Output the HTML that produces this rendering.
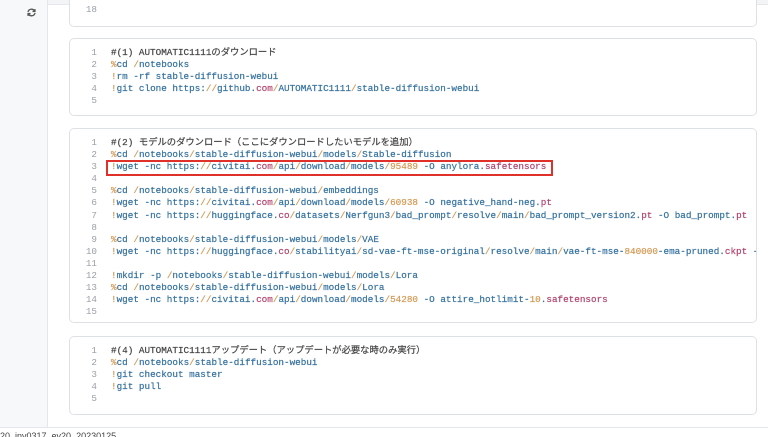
<!DOCTYPE html>
<html><head><meta charset="utf-8"><style>
body{margin:0;width:768px;height:436px;overflow:hidden;background:#fff;font-family:"Liberation Sans",sans-serif;position:relative}
.side{position:absolute;left:0;top:0;width:47px;height:427px;background:#f7f8fa;border-right:1px solid #e3e6ea}
.topb{position:absolute;left:48px;top:0;width:720px;height:4px;background:#f3f4f6;border-bottom:1px solid #e6e8eb}
.cell{position:absolute;left:69px;width:686px;border:1px solid #dde1e6;border-radius:5px;background:#fff;overflow:hidden}
pre{margin:0;position:absolute;left:0;top:8px;font-family:"Liberation Mono","Noto Sans CJK JP",monospace;font-size:9.3px;line-height:12.1px;color:#35729f;white-space:pre;-webkit-text-stroke:0.2px currentColor}
.n{display:inline-block;width:27px;text-align:right;color:#9aa0a6;margin-right:14px;-webkit-text-stroke:0}
.o{color:#d39a55}.p{color:#b2456e}.c{color:#444}
.red{position:absolute;left:106px;top:160px;width:443px;height:12px;border:2px solid #e0302a}
.bot{position:absolute;left:0;top:427px;width:768px;height:9px;border-top:1px solid #e3e6ea;background:#fff;font-size:9px;color:#444;line-height:9px;overflow:hidden}
</style></head><body>
<div class="side"><svg style="position:absolute;left:27px;top:8px" width="9" height="9" viewBox="0 0 9 9"><path d="M1 4A3.5 3.5 0 0 1 7.5 3M8 5A3.5 3.5 0 0 1 1.5 6" stroke="#555" stroke-width="1.3" fill="none"/><path d="M8 1v2.5H5.5M1 8V5.5h2.5" stroke="#555" stroke-width="1.2" fill="none"/></svg></div>
<div class="topb"></div>
<div class="cell" style="top:-10px;height:35px"><pre style="top:13px"><span class="n">18</span></pre></div>
<div class="cell" style="top:38px;height:76px"><pre><span class="n">1</span><span class="c">#(1) AUTOMATIC1111のダウンロード</span>
<span class="n">2</span><span class="o">%</span>cd <span class="o">/</span>notebooks
<span class="n">3</span><span class="o">!</span>rm -rf stable-diffusion-webui
<span class="n">4</span><span class="o">!</span>git clone https:<span class="o">//</span>github.<span class="p">com</span><span class="o">/</span>AUTOMATIC1111<span class="o">/</span>stable-diffusion-webui
<span class="n">5</span></pre></div>
<div class="cell" style="top:128px;height:193px"><pre><span class="n">1</span><span class="c">#(2) モデルのダウンロード（ここにダウンロードしたいモデルを追加）</span>
<span class="n">2</span><span class="o">%</span>cd <span class="o">/</span>notebooks<span class="o">/</span>stable-diffusion-webui<span class="o">/</span>models<span class="o">/</span>Stable-diffusion
<span class="n">3</span><span class="o">!</span>wget -nc https:<span class="o">//</span>civitai.<span class="p">com</span><span class="o">/</span>api<span class="o">/</span>download<span class="o">/</span>models<span class="o">/</span><span class="o">95489</span> -O anylora.<span class="p">safetensors</span>
<span class="n">4</span>
<span class="n">5</span><span class="o">%</span>cd <span class="o">/</span>notebooks<span class="o">/</span>stable-diffusion-webui<span class="o">/</span>embeddings
<span class="n">6</span><span class="o">!</span>wget -nc https:<span class="o">//</span>civitai.<span class="p">com</span><span class="o">/</span>api<span class="o">/</span>download<span class="o">/</span>models<span class="o">/</span><span class="o">60938</span> -O negative_hand-neg.<span class="p">pt</span>
<span class="n">7</span><span class="o">!</span>wget -nc https:<span class="o">//</span>huggingface.<span class="p">co</span><span class="o">/</span>datasets<span class="o">/</span>Nerfgun3<span class="o">/</span>bad_prompt<span class="o">/</span>resolve<span class="o">/</span>main<span class="o">/</span>bad_prompt_version2.<span class="p">pt</span> -O bad_prompt.<span class="p">pt</span>
<span class="n">8</span>
<span class="n">9</span><span class="o">%</span>cd <span class="o">/</span>notebooks<span class="o">/</span>stable-diffusion-webui<span class="o">/</span>models<span class="o">/</span>VAE
<span class="n">10</span><span class="o">!</span>wget -nc https:<span class="o">//</span>huggingface.<span class="p">co</span><span class="o">/</span>stabilityai<span class="o">/</span>sd-vae-ft-mse-original<span class="o">/</span>resolve<span class="o">/</span>main<span class="o">/</span>vae-ft-mse-<span class="o">840000</span>-ema-pruned.<span class="p">ckpt</span> -O vae.ckpt
<span class="n">11</span>
<span class="n">12</span><span class="o">!</span>mkdir -p <span class="o">/</span>notebooks<span class="o">/</span>stable-diffusion-webui<span class="o">/</span>models<span class="o">/</span>Lora
<span class="n">13</span><span class="o">%</span>cd <span class="o">/</span>notebooks<span class="o">/</span>stable-diffusion-webui<span class="o">/</span>models<span class="o">/</span>Lora
<span class="n">14</span><span class="o">!</span>wget -nc https:<span class="o">//</span>civitai.<span class="p">com</span><span class="o">/</span>api<span class="o">/</span>download<span class="o">/</span>models<span class="o">/</span><span class="o">54280</span> -O attire_hotlimit-<span class="o">10</span>.<span class="p">safetensors</span>
<span class="n">15</span></pre></div>
<div class="red"></div>
<div class="cell" style="top:336px;height:77px"><pre><span class="n">1</span><span class="c">#(4) AUTOMATIC1111アップデート（アップデートが必要な時のみ実行）</span>
<span class="n">2</span><span class="o">%</span>cd <span class="o">/</span>notebooks<span class="o">/</span>stable-diffusion-webui
<span class="n">3</span><span class="o">!</span>git checkout master
<span class="n">4</span><span class="o">!</span>git pull
<span class="n">5</span></pre></div>
<div class="bot"><span style="position:relative;top:4px">20_inv0317_ev20_20230125</span></div>
</body></html>
